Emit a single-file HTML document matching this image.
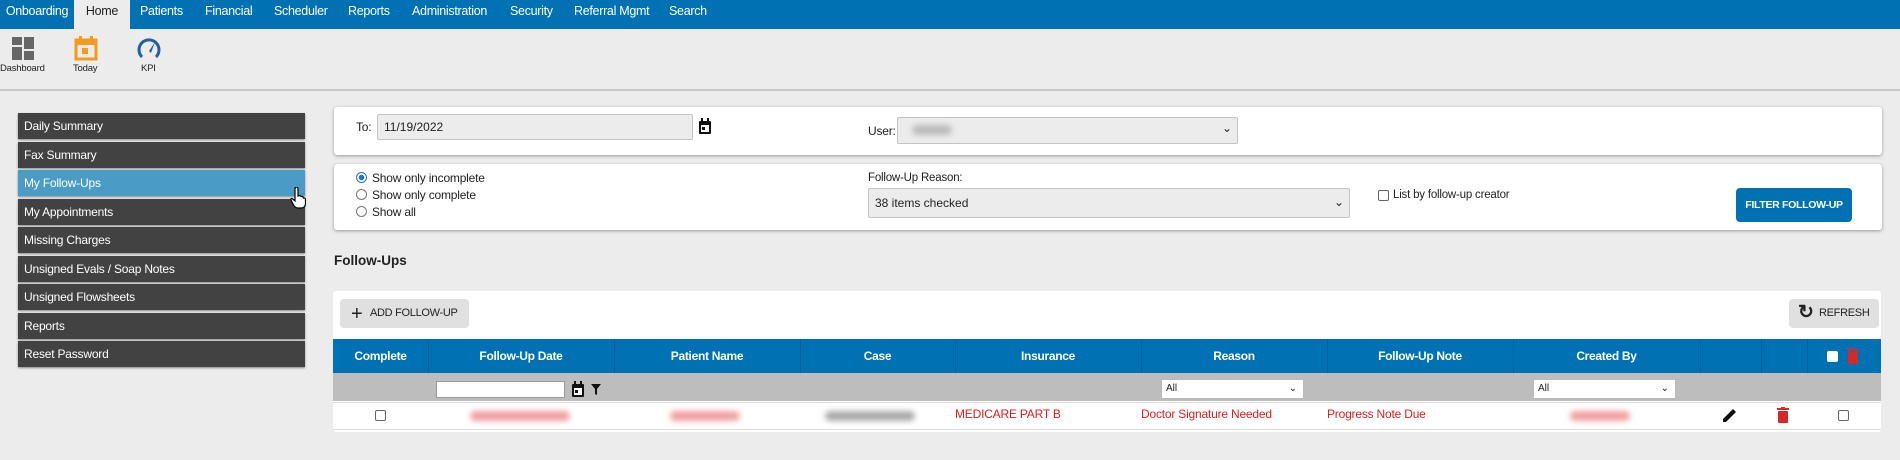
<!DOCTYPE html>
<html><head><style>
*{box-sizing:border-box;margin:0;padding:0}
body{width:1900px;height:460px;background:#ececec;font-family:"Liberation Sans",sans-serif;font-size:12px;color:#222;position:relative;overflow:hidden}
.abs{position:absolute;white-space:nowrap}
.top{left:0;top:0;width:1900px;height:29px;background:#0071b2}
.top span{position:absolute;top:0;height:29px;line-height:22px;color:#fff;font-size:12.5px;letter-spacing:-0.3px}
.tool{left:0;top:29px;width:1900px;height:62px;background:#ececec;border-bottom:2px solid #c8c8c8}
.lbl{font-size:9.5px;color:#222;position:absolute;top:63px;letter-spacing:-0.2px}
.side div{position:absolute;left:18px;width:287px;height:26px;background:#424242;color:#fff;font-size:12px;line-height:26px;padding-left:6px;box-shadow:0 1px 2px #888;letter-spacing:-0.2px}
.panel{background:#fff;border-radius:3px;box-shadow:0 1px 3px #999}
.inp{background:#ececec;border:1px solid #c4c4c4;border-radius:2px;font-size:12px;line-height:24px;padding-left:6px}
.radio{width:11px;height:11px;border:1px solid #777;border-radius:50%;position:absolute;background:#fff}
.cb{width:11px;height:11px;border:1px solid #666;border-radius:2px;position:absolute;background:#fff}
.hd{left:333px;top:339px;width:1548px;height:34px;background:#0071b2}
.hd span{position:absolute;top:0;line-height:34px;color:#fff;font-weight:bold;font-size:12px;text-align:center;letter-spacing:-0.3px}
.vl{position:absolute;top:0;width:1px;height:34px;background:#00609a}
.red{color:#e41e1e;font-size:12px;position:absolute;top:407px;letter-spacing:-0.2px}
.blur{position:absolute;height:10px;border-radius:5px;filter:blur(3px)}
.sel{position:absolute;background:#fff;border:1px solid #bbb;font-size:10px;line-height:18px;padding-left:4px;height:20px}
.t{font-size:12px;letter-spacing:-0.2px}
</style></head><body>
<div class="abs top">
<span style="left:0;width:74px;text-align:center">Onboarding</span>
<span style="left:74px;width:56px;background:#ececec;color:#222;text-align:center">Home</span>
<span style="left:140px">Patients</span>
<span style="left:205px">Financial</span>
<span style="left:274px">Scheduler</span>
<span style="left:348px">Reports</span>
<span style="left:412px">Administration</span>
<span style="left:510px">Security</span>
<span style="left:574px">Referral Mgmt</span>
<span style="left:669px">Search</span>
</div>
<div class="abs tool"></div>
<div class="abs" style="left:12px;top:37px;width:10px;height:8px;background:#666"></div>
<div class="abs" style="left:24px;top:37px;width:10px;height:12px;background:#666"></div>
<div class="abs" style="left:12px;top:47px;width:10px;height:13px;background:#666"></div>
<div class="abs" style="left:24px;top:51px;width:10px;height:9px;background:#666"></div>
<span class="lbl" style="left:0">Dashboard</span>
<svg class="abs" style="left:74px;top:35px" width="24" height="26" viewBox="0 0 24 26"><rect x="2" y="5" width="20" height="19" fill="none" stroke="#f59a1c" stroke-width="3"/><rect x="2" y="5" width="20" height="5" fill="#f59a1c"/><rect x="5" y="1" width="3" height="5" fill="#f59a1c"/><rect x="16" y="1" width="3" height="5" fill="#f59a1c"/><rect x="8" y="13" width="6" height="6" fill="#f59a1c"/></svg>
<span class="lbl" style="left:73px">Today</span>
<svg class="abs" style="left:136px;top:36px" width="26" height="24" viewBox="0 0 26 24"><path d="M6 21A10 10 0 1 1 20 21" fill="none" stroke="#1f5fa8" stroke-width="3"/><path d="M13 15L19 6L15 17Z" fill="#1f5fa8"/></svg>
<span class="lbl" style="left:141px">KPI</span>
<div class="side">
<div style="top:113px">Daily Summary</div>
<div style="top:141.5px">Fax Summary</div>
<div style="top:170px;background:#4a9cc7">My Follow-Ups</div>
<div style="top:198.5px">My Appointments</div>
<div style="top:227px">Missing Charges</div>
<div style="top:255.5px">Unsigned Evals / Soap Notes</div>
<div style="top:284px">Unsigned Flowsheets</div>
<div style="top:312.5px">Reports</div>
<div style="top:341px">Reset Password</div>
</div>
<svg class="abs" style="left:290px;top:187px" width="16" height="22" viewBox="0 0 16 22"><path d="M5 2Q5 0 6.5 0Q8 0 8 2V9Q10 8 11 9.5Q13 9 13.5 11Q15.5 10.5 15.5 13V17Q15 21 11 21H8Q5 21 3 17L1 13Q0.5 11.5 2 11.5L5 14Z" fill="#fff" stroke="#000" stroke-width="1.2"/></svg>
<div class="abs panel" style="left:334px;top:107px;width:1548px;height:48px"></div>
<span class="abs t" style="left:356px;top:120px">To:</span>
<div class="abs inp" style="left:377px;top:114px;width:316px;height:26px">11/19/2022</div>
<svg class="abs" style="left:698px;top:118px" width="14" height="17" viewBox="0 0 14 17"><rect x="1" y="3" width="12" height="13" rx="1" fill="#111"/><rect x="3" y="7" width="8" height="7" fill="#fff"/><rect x="4" y="9" width="3" height="3" fill="#111"/><rect x="3" y="0" width="2" height="4" fill="#111"/><rect x="9" y="0" width="2" height="4" fill="#111"/></svg>
<span class="abs t" style="left:868px;top:124px">User:</span>
<div class="abs inp" style="left:897px;top:117px;width:341px;height:27px"></div>
<div class="blur" style="left:912px;top:125px;width:40px;background:#bbb"></div>
<span class="abs" style="left:1222px;top:121px;font-size:12px">⌄</span>
<div class="abs panel" style="left:334px;top:164px;width:1548px;height:66px"></div>
<div class="radio" style="left:356px;top:172px;border-color:#1a73e8;background:radial-gradient(#1a73e8 40%,#fff 45%)"></div>
<span class="abs t" style="left:372px;top:171px">Show only incomplete</span>
<div class="radio" style="left:356px;top:189px"></div>
<span class="abs t" style="left:372px;top:188px">Show only complete</span>
<div class="radio" style="left:356px;top:206px"></div>
<span class="abs t" style="left:372px;top:205px">Show all</span>
<span class="abs t" style="left:868px;top:172px;font-size:11.5px">Follow-Up Reason:</span>
<div class="abs inp" style="left:868px;top:188px;width:482px;height:30px;line-height:28px">38 items checked</div>
<span class="abs" style="left:1334px;top:195px;font-size:12px">⌄</span>
<div class="cb" style="left:1378px;top:190px"></div>
<span class="abs t" style="left:1393px;top:189px;font-size:11.5px">List by follow-up creator</span>
<div class="abs" style="left:1736px;top:188px;width:116px;height:34px;background:#0071b2;border-radius:4px;color:#fff;font-weight:bold;font-size:10.5px;text-align:center;line-height:34px;letter-spacing:-0.3px">FILTER FOLLOW-UP</div>
<span class="abs" style="left:334px;top:253px;font-weight:bold;font-size:13.5px">Follow-Ups</span>
<div class="abs" style="left:333px;top:291px;width:1548px;height:141px;background:#fff;border-radius:3px"></div>
<div class="abs" style="left:340px;top:299px;width:129px;height:29px;background:#e0e0e0;border-radius:4px;font-size:11px;line-height:29px;padding-left:30px;letter-spacing:-0.3px">ADD FOLLOW-UP</div>
<span class="abs" style="left:351px;top:302px;font-size:20px;line-height:24px">+</span>
<div class="abs" style="left:1789px;top:299px;width:90px;height:29px;background:#e0e0e0;border-radius:4px;font-size:11px;line-height:29px;padding-left:30px;letter-spacing:-0.3px">REFRESH</div>
<span class="abs" style="left:1798px;top:302px;font-size:19px;line-height:22px;font-weight:bold">↻</span>
<div class="abs hd">
<span style="left:0;width:95px">Complete</span>
<span style="left:95px;width:186px">Follow-Up Date</span>
<span style="left:281px;width:186px">Patient Name</span>
<span style="left:467px;width:155px">Case</span>
<span style="left:622px;width:186px">Insurance</span>
<span style="left:808px;width:186px">Reason</span>
<span style="left:994px;width:186px">Follow-Up Note</span>
<span style="left:1180px;width:187px">Created By</span>
<div class="vl" style="left:95px"></div><div class="vl" style="left:281px"></div><div class="vl" style="left:467px"></div><div class="vl" style="left:622px"></div><div class="vl" style="left:808px"></div><div class="vl" style="left:994px"></div><div class="vl" style="left:1180px"></div><div class="vl" style="left:1367px"></div><div class="vl" style="left:1428px"></div><div class="vl" style="left:1474px"></div>
<div class="cb" style="left:1494px;top:12px;border-color:#fff"></div>
<svg class="abs" style="left:1514px;top:9px" width="12" height="16" viewBox="0 0 12 16"><rect x="0" y="1" width="12" height="2" fill="#d62828"/><rect x="4" y="0" width="4" height="2" fill="#d62828"/><rect x="1" y="4" width="10" height="12" rx="1" fill="#d62828"/></svg>
</div>
<div class="abs" style="left:333px;top:373px;width:1548px;height:28px;background:#bdbdbd"></div>
<div class="abs" style="left:436px;top:381px;width:129px;height:17px;background:#fff;border:1px solid #999"></div>
<svg class="abs" style="left:571px;top:381px" width="14" height="17" viewBox="0 0 14 17"><rect x="1" y="3" width="12" height="13" rx="1" fill="#111"/><rect x="3" y="7" width="8" height="7" fill="#fff"/><rect x="4" y="9" width="3" height="3" fill="#111"/><rect x="3" y="0" width="2" height="4" fill="#111"/><rect x="9" y="0" width="2" height="4" fill="#111"/></svg>
<svg class="abs" style="left:591px;top:384px" width="10" height="11" viewBox="0 0 10 11"><path d="M0 0H10L6 5V11L4 10V5Z" fill="#111"/></svg>
<div class="sel" style="left:1161px;top:379px;width:143px">All<span style="position:absolute;right:6px">⌄</span></div>
<div class="sel" style="left:1533px;top:379px;width:143px">All<span style="position:absolute;right:6px">⌄</span></div>
<div class="abs" style="left:333px;top:402px;width:1548px;height:28px;border-top:1px solid #ddd;border-bottom:1px solid #ddd"></div>
<div class="cb" style="left:375px;top:410px"></div>
<div class="blur" style="left:470px;top:411px;width:100px;background:#f2a0a0"></div>
<div class="blur" style="left:670px;top:411px;width:70px;background:#f2a0a0"></div>
<div class="blur" style="left:825px;top:411px;width:90px;background:#aaa"></div>
<span class="red" style="left:955px">MEDICARE PART B</span>
<span class="red" style="left:1141px">Doctor Signature Needed</span>
<span class="red" style="left:1327px">Progress Note Due</span>
<div class="blur" style="left:1570px;top:411px;width:60px;background:#f2a0a0"></div>
<svg class="abs" style="left:1722px;top:407px" width="16" height="16" viewBox="0 0 16 16"><path d="M1 15V12L11 2L14 5L4 15Z" fill="#111"/></svg>
<svg class="abs" style="left:1777px;top:407px" width="12" height="16" viewBox="0 0 12 16"><rect x="0" y="1" width="12" height="2" fill="#d62828"/><rect x="4" y="0" width="4" height="2" fill="#d62828"/><rect x="1" y="4" width="10" height="12" rx="1" fill="#d62828"/></svg>
<div class="cb" style="left:1838px;top:410px"></div>
</body></html>
